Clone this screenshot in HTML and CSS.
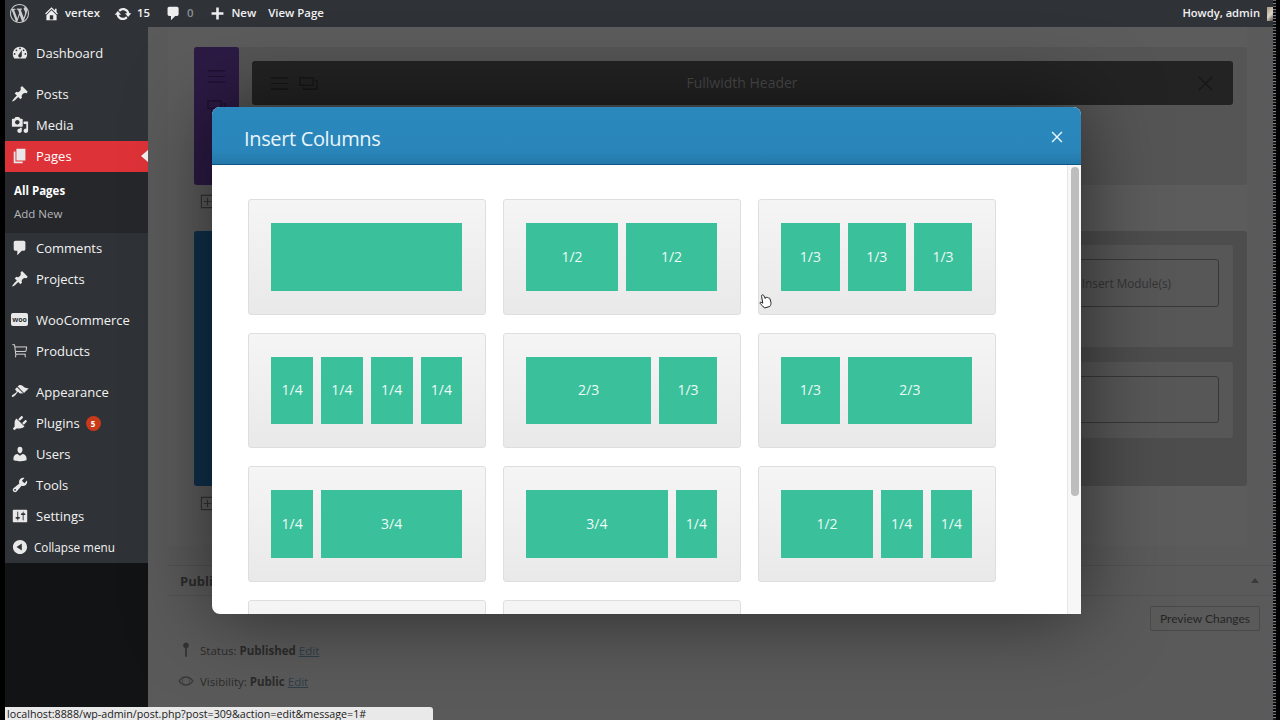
FILE: index.html
```html
<!DOCTYPE html>
<html lang="en">
<head>
<meta charset="utf-8">
<title>Insert Columns</title>
<link rel="stylesheet" href="styles.css">
</head>
<body>
<svg class="defs" aria-hidden="true">
  <symbol id="i-wp" viewBox="0 0 20 20"><path fill-rule="evenodd" d="M20 10c0-5.51-4.49-10-10-10C4.48 0 0 4.49 0 10c0 5.52 4.48 10 10 10 5.51 0 10-4.48 10-10zM7.78 15.37L4.37 6.22c.55-.02 1.17-.08 1.17-.08.5-.06.44-1.13-.06-1.11 0 0-1.45.11-2.37.11-.18 0-.37 0-.58-.01C4.12 2.69 6.87 1.11 10 1.11c2.33 0 4.45.87 6.05 2.34-.68-.11-1.65.39-1.65 1.58 0 .74.45 1.36.9 2.1.35.61.55 1.36.55 2.46 0 1.49-1.4 5-1.4 5l-3.03-8.37c.54-.02.82-.17.82-.17.5-.05.44-1.25-.06-1.22 0 0-1.44.12-2.38.12-.87 0-2.33-.12-2.33-.12-.5-.03-.56 1.2-.06 1.22l.92.08 1.26 3.41zM17.41 10c.24-.64.74-1.87.43-4.25.7 1.29 1.05 2.71 1.05 4.25 0 3.29-1.73 6.24-4.4 7.78.97-2.59 1.94-5.2 2.92-7.78zM6.1 18.09C3.12 16.65 1.11 13.53 1.11 10c0-1.3.23-2.48.72-3.59C3.25 10.3 4.67 14.2 6.1 18.09zm4.03-6.63l2.58 6.98c-.86.29-1.76.45-2.71.45-.79 0-1.57-.11-2.29-.33.81-2.38 1.62-4.74 2.42-7.1z"/></symbol>
  <symbol id="i-home" viewBox="0 0 20 20"><path fill-rule="evenodd" d="M16 8.5l1.53 1.53-1.06 1.06L10 4.62l-6.47 6.47-1.06-1.06L10 2.5l4 4v-2h2v4zm-6-2.46l6 5.99V18H4v-5.97zM12 17v-5H8v5h4z"/></symbol>
  <symbol id="i-update" viewBox="0 0 20 20"><path d="M10.2 3.28c3.53 0 6.43 2.61 6.92 6h2.08l-3.5 4-3.5-4h2.32c-.45-1.97-2.21-3.45-4.32-3.45-1.45 0-2.73.71-3.54 1.78L4.95 5.66C6.23 4.2 8.11 3.28 10.2 3.28zm-.4 13.44c-3.52 0-6.43-2.61-6.92-6H.8l3.5-4c1.17 1.33 2.33 2.67 3.5 4H5.48c.45 1.97 2.21 3.45 4.32 3.45 1.45 0 2.73-.71 3.54-1.78l1.71 1.95c-1.28 1.46-3.15 2.38-5.25 2.38z"/></symbol>
  <symbol id="i-comment" viewBox="0 0 20 20"><path d="M5 2h9c1.1 0 2 .9 2 2v7c0 1.1-.9 2-2 2h-2l-5 5v-5H5c-1.1 0-2-.9-2-2V4c0-1.1.9-2 2-2z"/></symbol>
  <symbol id="i-plus" viewBox="0 0 20 20"><path d="M17 8.5v3h-5.5V17h-3v-5.500H3v-3h5.500V3h3v5.500z"/></symbol>
  <symbol id="i-dash" viewBox="0 0 20 20"><path fill-rule="evenodd" d="M3.760 16h12.480c1.100-1.370 1.760-3.110 1.760-5 0-4.420-3.580-8-8-8s-8 3.580-8 8c0 1.890.660 3.630 1.760 5zM10 4c.55 0 1 .45 1 1s-.45 1-1 1-1-.45-1-1 .45-1 1-1zM6 6c.55 0 1 .45 1 1s-.45 1-1 1-1-.45-1-1 .45-1 1-1zm8 0c.55 0 1 .45 1 1s-.45 1-1 1-1-.45-1-1 .45-1 1-1zm-5.370 5.550L12 7v6c0 1.100-.9 2-2 2s-2-.9-2-2c0-.57.24-1.080.63-1.450zM4 10c.55 0 1 .45 1 1s-.45 1-1 1-1-.45-1-1 .45-1 1-1zm12 0c.55 0 1 .45 1 1s-.45 1-1 1-1-.45-1-1 .45-1 1-1z"/></symbol>
  <symbol id="i-post" viewBox="0 0 20 20"><path d="M10.440 3.020l1.820-1.820 6.360 6.350-1.830 1.820c-1.050-.68-2.480-.57-3.410.36l-.75.75c-.92.93-1.040 2.350-.35 3.410l-1.830 1.820-2.410-2.410-2.800 2.790c-.42.42-3.380 2.710-3.800 2.290s1.860-3.390 2.280-3.810l2.790-2.790L4.100 9.360l1.830-1.820c1.050.69 2.480.57 3.400-.36l.75-.75c.93-.92 1.050-2.350.36-3.410z"/></symbol>
  <symbol id="i-media" viewBox="0 0 20 20"><path fill-rule="evenodd" d="M13 11V4c0-.55-.45-1-1-1h-1.670L9 1H5L3.670 3H2c-.55 0-1 .45-1 1v7c0 .55.45 1 1 1h10c.55 0 1-.45 1-1zM7 4.500c1.380 0 2.500 1.120 2.500 2.500S8.380 9.500 7 9.500 4.500 8.380 4.500 7 5.620 4.500 7 4.500zM14 6h5v10.500c0 1.380-1.120 2.500-2.500 2.500S14 17.880 14 16.500s1.120-2.500 2.500-2.500c.17 0 .34.02.5.05V9h-3V6zm-4 8.050V13h2v3.500c0 1.380-1.120 2.500-2.500 2.500S7 17.880 7 16.500 8.120 14 9.500 14c.17 0 .34.02.5.05z"/></symbol>
  <symbol id="i-page" viewBox="0 0 20 20"><path d="M6 15V2h10v13H6zm-1 1h8v2H3V5h2v11z"/></symbol>
  <symbol id="i-brush" viewBox="0 0 20 20"><path d="M14.480 11.060L7.410 3.990l1.500-1.500c.5-.56 2.300-.47 3.510.32 1.210.8 1.430 1.280 2.910 2.100 1.180.64 2.450 1.260 4.450.85zm-.71.71L6.700 4.700 4.930 6.470c-.39.39-.39 1.020 0 1.410l1.060 1.060c.39.39.39 1.030 0 1.420-.6.6-1.430 1.110-2.210 1.690-.35.26-.7.53-1.010.84C1.430 13.230.4 14.460 1.200 15.260s2.030-.23 3.360-1.610c.31-.31.58-.66.84-1.010.58-.78 1.090-1.610 1.690-2.210.39-.39 1.020-.39 1.410 0l1.060 1.060c.39.39 1.020.39 1.410 0z"/></symbol>
  <symbol id="i-plug" viewBox="0 0 20 20"><path d="M13.110 4.360L9.870 7.600 8 5.730l3.240-3.240c.35-.34 1.050-.2 1.560.32.52.51.66 1.210.31 1.550zm-8 1.770l.91-1.120 9.010 9.010-1.190.84c-.71.71-2.630 1.160-3.820 1.160H6.140L4.900 17.260c-.59.59-1.540.59-2.120 0-.59-.58-.59-1.530 0-2.120l1.240-1.240v-3.880c0-1.130.4-3.190 1.090-3.890zm7.260 3.970l3.240-3.240c.34-.35 1.040-.21 1.550.31.52.51.66 1.210.31 1.550l-3.240 3.250z"/></symbol>
  <symbol id="i-user" viewBox="0 0 20 20"><path d="M10 9.250c-2.270 0-2.730-3.440-2.730-3.440C7 4.020 7.820 2 9.970 2c2.160 0 2.980 2.020 2.710 3.810 0 0-.41 3.440-2.680 3.440zm0 2.570L12.720 10c2.390 0 4.520 2.330 4.520 4.530v2.490s-3.650 1.130-7.240 1.130c-3.650 0-7.240-1.130-7.240-1.130v-2.490c0-2.250 1.940-4.480 4.470-4.480z"/></symbol>
  <symbol id="i-tool" viewBox="0 0 20 20"><path fill-rule="evenodd" d="M16.680 9.770c-1.340 1.340-3.300 1.670-4.950.99l-5.410 6.520c-.99.99-2.590.99-3.580 0s-.99-2.590 0-3.570l6.520-5.420c-.68-1.650-.35-3.610.99-4.950 1.280-1.280 3.120-1.620 4.720-1.060l-2.890 2.890 2.820 2.820 2.860-2.870c.53 1.580.18 3.390-1.080 4.670zM3.810 16.210c.4.39 1.040.39 1.430 0 .4-.4.4-1.040 0-1.430-.39-.4-1.030-.4-1.430 0-.39.39-.39 1.030 0 1.430z"/></symbol>
  <symbol id="i-set" viewBox="0 0 20 20"><path fill-rule="evenodd" d="M18 16V4c0-.55-.45-1-1-1H3c-.55 0-1 .45-1 1v12c0 .55.45 1 1 1h14c.55 0 1-.45 1-1zM8 11h1c.55 0 1 .45 1 1s-.45 1-1 1H8v1.500c0 .28-.22.5-.5.5s-.5-.22-.5-.5V13H6c-.55 0-1-.45-1-1s.45-1 1-1h1V5.500c0-.28.22-.5.5-.5s.5.22.5.5V11zm5-2h-1c-.55 0-1-.45-1-1s.45-1 1-1h1V5.500c0-.28.22-.5.5-.5s.5.22.5.5V7h1c.55 0 1 .45 1 1s-.45 1-1 1h-1v5.500c0 .28-.22.5-.5.5s-.5-.22-.5-.5V9z"/></symbol>
  <symbol id="i-coll" viewBox="0 0 20 20"><path fill-rule="evenodd" d="M10 2.160c4.330 0 7.840 3.510 7.840 7.840s-3.510 7.840-7.840 7.840S2.160 14.330 2.160 10 5.710 2.160 10 2.160zm2 11.720V6.120L6.180 9.970z"/></symbol>
  <symbol id="i-cart" viewBox="0 0 20 20"><path fill="none" stroke="currentColor" stroke-width="1.100" d="M1.500 3h2.500l1.200 10.500h11M4.300 5.500h13.200l-1 5H5M5.500 13.500l-.5 3.500M15.500 13.500l.5 3.500"/></symbol>
  <symbol id="i-lines" viewBox="0 0 20 20"><path fill="none" stroke="currentColor" stroke-width="1.300" d="M1 4h18M1 10h18M1 16h18"/></symbol>
  <symbol id="i-copy" viewBox="0 0 20 20"><path fill="none" stroke="currentColor" stroke-width="1.300" d="M1 4h14v8H1zM17 7h2v9H5v-2"/></symbol>
  <symbol id="i-x" viewBox="0 0 20 20"><path fill="none" stroke="currentColor" stroke-width="2" d="M3 3l14 14M17 3L3 17"/></symbol>
  <symbol id="i-x-thin" viewBox="0 0 20 20"><path fill="none" stroke="currentColor" stroke-width="1.300" d="M3 3l14 14M17 3L3 17"/></symbol>
  <symbol id="i-add" viewBox="0 0 16 16"><path fill="none" stroke="currentColor" stroke-width="1.200" d="M1.500 1.500h13v13h-13zM8 4v8M4 8h8"/></symbol>
  <symbol id="i-pin" viewBox="0 0 12 18"><path d="M6 0a3.500 3.500 0 0 1 1 6.850V17H5V6.850A3.500 3.500 0 0 1 6 0z"/></symbol>
  <symbol id="i-eye" viewBox="0 0 20 14"><path fill-rule="evenodd" d="M10 1c4 0 7.500 2.500 9.500 6-2 3.500-5.500 6-9.500 6S2.500 10.500.5 7C2.500 3.500 6 1 10 1zm0 2a4 4 0 1 0 0 8 4 4 0 0 0 0-8zM2.500 7c1.200 1.800 2.800 3.100 4.500 3.800A5 5 0 0 1 7 3.200C5.300 3.900 3.700 5.200 2.500 7zM13 3.200a5 5 0 0 1 0 7.600c1.700-.7 3.300-2 4.500-3.800-1.200-1.800-2.800-3.100-4.500-3.800z"/></symbol>
</svg>

<div class="screen">
  <div class="app">
    <header class="adminbar">
      <svg class="ab-logo"><use href="#i-wp"/></svg>
      <span class="ab-item ab-site"><svg class="ab-ic"><use href="#i-home"/></svg>vertex</span>
      <span class="ab-item ab-updates"><svg class="ab-ic"><use href="#i-update"/></svg>15</span>
      <span class="ab-item ab-comments"><svg class="ab-ic"><use href="#i-comment"/></svg><span class="ab-zero">0</span></span>
      <span class="ab-item ab-new"><svg class="ab-ic"><use href="#i-plus"/></svg>New</span>
      <span class="ab-item ab-view">View Page</span>
      <span class="ab-howdy">Howdy, admin</span>
      <span class="ab-avatar"></span>
    </header>

    <div class="workspace">
      <nav class="sidebar">
        <ul class="menu">
          <li class="item"><svg class="mi"><use href="#i-dash"/></svg>Dashboard</li>
          <li class="sep"></li>
          <li class="item"><svg class="mi"><use href="#i-post"/></svg>Posts</li>
          <li class="item"><svg class="mi"><use href="#i-media"/></svg>Media</li>
          <li class="item active"><svg class="mi"><use href="#i-page"/></svg>Pages</li>
          <li class="submenu">
            <span class="sub current">All Pages</span>
            <span class="sub">Add New</span>
          </li>
          <li class="item"><svg class="mi"><use href="#i-comment"/></svg>Comments</li>
          <li class="item"><svg class="mi"><use href="#i-post"/></svg>Projects</li>
          <li class="sep"></li>
          <li class="item"><span class="woo">woo</span>WooCommerce</li>
          <li class="item"><svg class="mi"><use href="#i-cart"/></svg>Products</li>
          <li class="sep"></li>
          <li class="item"><svg class="mi"><use href="#i-brush"/></svg>Appearance</li>
          <li class="item"><svg class="mi"><use href="#i-plug"/></svg>Plugins<span class="badge">5</span></li>
          <li class="item"><svg class="mi"><use href="#i-user"/></svg>Users</li>
          <li class="item"><svg class="mi"><use href="#i-tool"/></svg>Tools</li>
          <li class="item"><svg class="mi"><use href="#i-set"/></svg>Settings</li>
          <li class="item collapse"><svg class="mi"><use href="#i-coll"/></svg>Collapse menu</li>
        </ul>
      </nav>

      <main class="content">
        <div class="panel">
          <section class="section section-one">
            <div class="side side-purple">
              <svg class="side-ic"><use href="#i-lines"/></svg>
              <svg class="side-ic"><use href="#i-copy"/></svg>
            </div>
            <div class="rows">
              <div class="fw-header">
                <svg class="fw-ic"><use href="#i-lines"/></svg>
                <svg class="fw-ic"><use href="#i-copy"/></svg>
                <span class="fw-title">Fullwidth Header</span>
                <svg class="fw-ic"><use href="#i-x-thin"/></svg>
              </div>
            </div>
          </section>
          <svg class="add-ic"><use href="#i-add"/></svg>
          <section class="section section-two">
            <div class="side side-blue"></div>
            <div class="rows">
              <div class="row row-a"><div class="insert">Insert Module(s)</div></div>
              <div class="row row-b"><div class="insert"></div></div>
            </div>
          </section>
          <svg class="add-ic add-two"><use href="#i-add"/></svg>
        </div>

        <div class="publish">
          <div class="pub-head"><strong>Publish</strong><span class="pub-arrow"></span></div>
          <div class="pub-actions"><span class="preview">Preview Changes</span></div>
          <div class="pub-line"><svg class="pub-pin"><use href="#i-pin"/></svg>Status: <b>Published</b> <u>Edit</u></div>
          <div class="pub-line"><svg class="pub-eye"><use href="#i-eye"/></svg>Visibility: <b>Public</b> <u>Edit</u></div>
        </div>
      </main>
    </div>
  </div>
  <div class="noise"></div>
</div>

<div class="modal">
  <div class="modal-head">
    <h1 class="modal-title">Insert Columns</h1>
    <svg class="modal-close"><use href="#i-x"/></svg>
  </div>
  <div class="modal-body">
    <div class="cards">
      <div class="card"><span class="col s12"></span></div>
      <div class="card"><span class="col s6">1/2</span><span class="col s6">1/2</span></div>
      <div class="card"><span class="col s4">1/3</span><span class="col s4">1/3</span><span class="col s4">1/3</span></div>
      <div class="card"><span class="col s3">1/4</span><span class="col s3">1/4</span><span class="col s3">1/4</span><span class="col s3">1/4</span></div>
      <div class="card"><span class="col s8">2/3</span><span class="col s4">1/3</span></div>
      <div class="card"><span class="col s4">1/3</span><span class="col s8">2/3</span></div>
      <div class="card"><span class="col s3">1/4</span><span class="col s9">3/4</span></div>
      <div class="card"><span class="col s9">3/4</span><span class="col s3">1/4</span></div>
      <div class="card"><span class="col s6">1/2</span><span class="col s3">1/4</span><span class="col s3">1/4</span></div>
      <div class="card"></div>
      <div class="card"></div>
    </div>
    <div class="scrollbar"><div class="thumb"></div></div>
  </div>
</div>

<svg class="cursor" viewBox="0 0 14 16"><path d="M3 1.500c.8-.5 1.500 0 1.900.8l1.300 2.700.3-1c.6-.5 1.300-.3 1.500.3.500-.5 1.200-.3 1.500.3.600-.3 1.200 0 1.400.6l1 3.600c.3 1.600-.2 3-1.200 4.200l-5.200 1.500c-1-1.100-2.400-2.800-4.200-4.300-.7-.7-.2-1.700.8-1.400l1.700.9L2.600 3c-.2-.6 0-1.200.4-1.500z" fill="#fff" stroke="#222" stroke-width="1"/></svg>

<div class="statusbar">localhost:8888/wp-admin/post.php?post=309&amp;action=edit&amp;message=1#</div>
</body>
</html>
```

FILE: styles.css
```css
* { box-sizing: border-box; }
html, body { margin: 0; padding: 0; }
body {
  width: 1280px;
  height: 720px;
  overflow: hidden;
  position: relative;
  background: #000;
  font-family: "Open Sans", "Liberation Sans", sans-serif;
}
.defs { position: absolute; width: 0; height: 0; }
.screen { display: flex; height: 720px; padding-left: 5px; background: #000; }
.app { width: 1268px; height: 720px; display: flex; flex-direction: column; }
.noise {
  width: 3px;
  height: 720px;
  background: repeating-linear-gradient(180deg, #6b6b6b 0 1px, #0a0a0a 1px 3px, #8a7f8e 3px 4px, #1b1b24 4px 6px);
}

/* admin bar */
.adminbar {
  height: 27px;
  flex: none;
  display: flex;
  align-items: center;
  background: #2f3338;
  color: #f1f1f1;
  font-size: 11.4px;
  font-weight: 600;
  padding: 0 0 2px 5px;
}
.ab-logo { width: 19px; height: 19px; fill: #c9cbcd; margin: 2px 14px 0 0; }
.ab-item { display: flex; align-items: center; white-space: nowrap; }
.ab-ic { width: 17px; height: 17px; fill: #eee; margin: 2px 5px 0 0; }
.ab-site { margin-right: 14px; }
.ab-updates { margin-right: 15px; }
.ab-updates .ab-ic { width: 18px; height: 18px; }
.ab-comments { margin-right: 16px; }
.ab-zero { color: #8c8f94; }
.ab-new { margin-right: 12px; }
.ab-howdy { margin-left: auto; margin-right: 7px; font-size: 11.2px; }
.ab-avatar { width: 6px; height: 14px; margin-top: 2px; background: linear-gradient(135deg, #a89a80, #d8d4c8 55%, #55503f); }

.workspace { flex: 1; display: flex; min-height: 0; }

/* sidebar */
.sidebar { width: 143px; flex: none; background: #111315; }
.menu {
  list-style: none;
  margin: 0;
  padding: 11px 0 0;
  background: #2f3237;
  color: #f2f2f2;
  font-size: 13px;
}
.item { height: 31px; display: flex; align-items: center; padding: 0 0 1px 31px; position: relative; white-space: nowrap; }
.item.active { padding-bottom: 2px; }
.sep { height: 10px; }
.mi { position: absolute; left: 6px; top: 6px; width: 18px; height: 18px; fill: #e8e8e8; color: #d8d8d8; }
.active { background: #dd3238; color: #fff; }
.active::after {
  content: "";
  position: absolute;
  right: 0;
  top: 9px;
  border: 6px solid transparent;
  border-right-color: #f1f1f1;
  border-left-width: 0;
  border-right-width: 7px;
}
.submenu {
  height: 61px;
  background: #25272b;
  padding: 9px 0 0 9px;
  display: flex;
  flex-direction: column;
  gap: 4px;
  font-size: 11.5px;
}
.sub { line-height: 19px; color: #b5b6b8; }
.current { color: #fff; font-weight: 700; }
.woo {
  position: absolute;
  left: 6px;
  top: 8px;
  width: 17px;
  height: 13px;
  border-radius: 2px;
  background: #e8e8e8;
  color: #2f3237;
  font-size: 7px;
  font-weight: 700;
  line-height: 13px;
  text-align: center;
}
.badge {
  width: 15px;
  height: 15px;
  margin-left: 6px;
  border-radius: 50%;
  background: #c93a1a;
  color: #fff;
  font-size: 8px;
  font-weight: 700;
  line-height: 15px;
  text-align: center;
}
.collapse { padding-left: 29px; font-size: 11.7px; }

/* background editor */
.content {
  flex: 1;
  min-width: 0;
  background: #5a5a5a;
  padding-left: 20px;
  overflow: hidden;
}
.panel {
  height: 518px;
  margin-right: 26px;
  padding: 20px 0 0 26px;
  background: #5c5c5c;
}
.section { display: flex; border-radius: 3px; }
.section-one { height: 138px; background: #555; }
.section-two { height: 255px; margin-top: 47px; background: #4d4d4d; }
.side { width: 45px; flex: none; border-radius: 3px; padding-top: 20px; display: flex; flex-direction: column; align-items: center; gap: 11px; }
.side-purple { background: #2c1a44; color: #1c0f30; }
.side-blue { background: #10304a; }
.side-ic { width: 19px; height: 19px; }
.rows { flex: 1; padding: 14px 14px 0 13px; display: flex; flex-direction: column; }
.fw-header {
  height: 44px;
  display: flex;
  align-items: center;
  gap: 10px;
  padding: 0 18px;
  border-radius: 3px;
  background: #232323;
  color: #151515;
}
.fw-ic { width: 19px; height: 19px; }
.fw-title { flex: 1; text-align: center; font-size: 14px; color: #4a4a4a; padding: 0 30px 2px 0; }
.row { border-radius: 3px; background: #575757; padding: 14px 14px 0 40px; display: flex; }
.row-a { height: 102px; }
.row-b { height: 76px; margin-top: 15px; }
.row-a .insert { height: 48px; }
.row-b .insert { height: 47px; }
.insert {
  flex: 1;
  border: 1px solid #383838;
  border-radius: 3px;
  display: flex;
  align-items: center;
  justify-content: flex-end;
  padding-right: 47px;
  font-size: 11.8px;
  color: #333;
}
.add-ic { display: block; width: 15px; height: 15px; margin: 9px 0 0 6px; color: #333; }
.add-ic + .section-two { margin-top: 22px; }
.add-two { margin-top: 10px; }

.publish { margin-top: 20px; background: #5a5a5a; color: #2b2b2b; font-size: 11.5px; }
.pub-head {
  height: 31px;
  border-bottom: 1px solid #525252;
  border-top: 1px solid #525252;
  display: flex;
  align-items: center;
  justify-content: space-between;
  padding: 0 14px 0 12px;
  font-size: 13px;
}
.pub-arrow { border: 4px solid transparent; border-bottom: 5px solid #3a3a3a; border-top: 0; }
.pub-actions { display: flex; justify-content: flex-end; padding: 10px 13px 0 0; height: 39px; }
.preview {
  width: 110px;
  height: 25px;
  border: 1px solid #4a4a4a;
  border-radius: 2px;
  display: flex;
  align-items: center;
  justify-content: center;
  font-family: Lato, "Open Sans", sans-serif;
  font-size: 12px;
  color: #262626;
}
.pub-line { height: 31px; line-height: 31px; padding-left: 32px; position: relative; white-space: pre; }
.pub-line b { font-weight: 700; }
.pub-line u { color: #2e3e48; }
.pub-pin { position: absolute; left: 13px; top: 7px; width: 10px; height: 16px; fill: #333; }
.pub-eye { position: absolute; left: 10px; top: 9px; width: 16px; height: 12px; fill: #3a3a3a; }

/* modal */
.modal {
  position: absolute;
  left: 212px;
  top: 107px;
  width: 869px;
  height: 507px;
  border-radius: 8px 8px 0 8px;
  background: #fff;
  box-shadow: 0 0 80px rgba(0, 0, 0, .55);
  overflow: hidden;
}
.modal-head {
  height: 58px;
  display: flex;
  align-items: center;
  justify-content: space-between;
  padding: 6px 17px 0 32px;
  background: linear-gradient(180deg, #2a88bd 0, #2a86ba 75%, #2478aa 100%);
  border-bottom: 1px solid #0e5688;
}
.modal-title { margin: 0; font-size: 20px; font-weight: 400; letter-spacing: -.35px; color: #e9f5fb; }
.modal-close { width: 14px; height: 14px; color: #e8f6fd; margin-top: -4px; }
.modal-body { height: 449px; position: relative; overflow: hidden; padding: 34px 0 0 36px; }
.cards { display: grid; grid-template-columns: repeat(3, 237.5px); grid-auto-rows: 115.5px; gap: 18px 17.5px; }
.card {
  display: grid;
  grid-template-columns: repeat(12, 1fr);
  gap: 8px;
  padding: 23px 22.25px;
  border: 1px solid #dedede;
  border-radius: 3px;
  background: linear-gradient(180deg, #f5f5f5, #e9e9e9);
}
.col {
  display: flex;
  align-items: center;
  justify-content: center;
  padding-bottom: 1px;
  background: #3ac09b;
  color: #eefaf6;
  font-size: 14px;
}
.s3 { grid-column: span 3; }
.s4 { grid-column: span 4; }
.s6 { grid-column: span 6; }
.s8 { grid-column: span 8; }
.s9 { grid-column: span 9; }
.s12 { grid-column: span 12; }
.scrollbar {
  position: absolute;
  right: 0;
  top: 0;
  bottom: 0;
  width: 14px;
  background: #f7f7f7;
  border-left: 1px solid #e6e6e6;
  padding: 2px 0 0 3px;
}
.thumb { width: 8px; height: 329px; border-radius: 4px; background: #bdbdbd; }

.cursor { position: absolute; left: 759px; top: 293px; width: 14px; height: 17px; }

.statusbar {
  position: absolute;
  left: 5px;
  bottom: 0;
  width: 428px;
  height: 13px;
  padding-left: 2px;
  background: #e9e9e9;
  border-radius: 0 3px 0 0;
  color: #202020;
  font-family: "Open Sans", sans-serif;
  font-size: 10.7px;
  line-height: 14px;
  white-space: nowrap;
  overflow: hidden;
}
```
